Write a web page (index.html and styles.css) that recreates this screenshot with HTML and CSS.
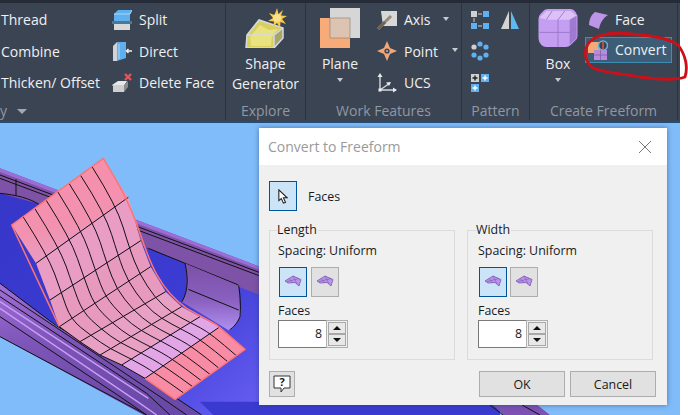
FILE: index.html
```html
<!DOCTYPE html>
<html lang="en">
<head>
<meta charset="utf-8">
<title>Convert to Freeform</title>
<link rel="stylesheet" href="styles.css">
</head>
<body>
<div class="app">
  <div class="ribbon">
    <section class="panel p-modify">
      <div class="panel-body">
        <div class="col col-a">
          <div class="tool">Thread</div>
          <div class="tool">Combine</div>
          <div class="tool">Thicken/ Offset</div>
        </div>
        <div class="col col-b">
          <div class="tool">
            <svg class="ico" viewBox="0 0 20 20"><path d="M2 4 6 0H20L18 4V11H2Z" fill="#5fb0ee"/><path d="M2 4H18L20 0" fill="none" stroke="#a8d8fa"/><path d="M0 11H20V14H0Z" fill="#4a7898"/><path d="M2 14H18V20H2Z" fill="#d8d8d8"/></svg>
            Split
          </div>
          <div class="tool">
            <svg class="ico" viewBox="0 0 20 20"><path d="M1 5 5 1V20H1Z" fill="#d0d4d8"/><path d="M5 1H14V17L5 20Z" fill="#5fb0ee"/><path d="M7 3V18" stroke="#a8d8fa"/><path d="M15 10H20M16.500 8l-2 2 2 2" fill="none" stroke="#f2f2f2" stroke-width="1.500"/></svg>
            Direct
          </div>
          <div class="tool">
            <svg class="ico" viewBox="0 0 20 20"><path d="M0 12 6 8H15L12 13H1Z" fill="#e8e8e8"/><path d="M1 12H12V19H1Z" fill="#cfcfcf"/><path d="M12 12 16 8V14L12 19Z" fill="#8c8c8c"/><path d="M13 1 19 7M19 1 13 7" stroke="#e8525c" stroke-width="2.400"/></svg>
            Delete Face
          </div>
        </div>
      </div>
      <div class="panel-title title-clip">y <span class="caret caret-title"></span></div>
    </section>

    <section class="panel p-explore">
      <div class="panel-body center-col">
        <svg class="ico-large" viewBox="0 0 42 40"><path d="M2 27 14 12 38 20 29 27V40H1Z" fill="#d8cf60"/><path d="M5 29 15 17 24 22 33 21 27 28 26 38H6Z" fill="#e9e27e"/><path d="M29 27 38 20V30L29 40Z" fill="#a8a46a"/><path d="M2 27 14 12 38 20V30L29 40H1ZM2 27H29L38 20M29 27V40" fill="none" stroke="#d3dbe2" stroke-width="1.500"/><path d="M32 0 33.500 6 38 2 36 7.500 42 8 37 11 41 16 35.500 14 35 20 32 15 28 19 29 13.500 23 13 28 10 24 5 29.500 7Z" fill="#f8c850"/><circle cx="32" cy="10" r="4" fill="#fbe08a"/></svg>
        <div class="label label-gen">Shape<br>Generator</div>
      </div>
      <div class="panel-title">Explore</div>
    </section>

    <section class="panel p-work">
      <div class="panel-body">
        <div class="center-col col-plane">
          <svg class="ico-plane" viewBox="0 0 40 40"><rect x="10" y="0" width="30" height="30" fill="#d6d6d6"/><rect x="0" y="10" width="30" height="30" fill="#f6ab78"/><rect x="10" y="10" width="20" height="20" fill="#dcc3b2" stroke="#8d7d70" stroke-width=".6"/></svg>
          <div class="label">Plane</div>
          <span class="caret"></span>
        </div>
        <div class="col col-wf">
          <div class="tool">
            <svg class="ico" viewBox="0 0 20 20"><path d="M4 1H20V16H6Z" fill="#d8d8d8"/><path d="M1 19 14 6" stroke="#9a8878" stroke-width="3"/><path d="M1 19 8 12" stroke="#6e6258" stroke-width="3"/></svg>
            Axis <span class="caret caret-side caret-axis"></span>
          </div>
          <div class="tool">
            <svg class="ico" viewBox="0 0 20 20"><path d="M10 0 13 7 20 10 13 13 10 20 7 13 0 10 7 7Z" fill="#f0a878"/><circle cx="10" cy="10" r="2.600" fill="#3b4453"/><circle cx="10" cy="10" r="1" fill="#f0a878"/></svg>
            Point <span class="caret caret-side caret-point"></span>
          </div>
          <div class="tool">
            <svg class="ico" viewBox="0 0 20 20"><path d="M3 17V2M3 17H19M3 17 13 10" fill="none" stroke="#d4d8dc" stroke-width="1.400"/><path d="M3 0 .5 4H5.500ZM20 17 16 14.500V19.500ZM14 9 9 9.500 12 13Z" fill="#e8ecef"/><rect x="1.500" y="15.500" width="3" height="3" fill="#f0f0f0"/></svg>
            UCS
          </div>
        </div>
      </div>
      <div class="panel-title">Work Features</div>
    </section>

    <section class="panel p-pattern">
      <div class="panel-body pattern-grid">
        <svg class="ico ico-p1" viewBox="0 0 20 20"><rect x="1" y="1" width="6" height="6" fill="#d0d0d0"/><rect x="13" y="1" width="6" height="6" fill="#5fb0ee"/><rect x="1" y="13" width="6" height="6" fill="#5fb0ee"/><rect x="13" y="13" width="6" height="6" fill="#5fb0ee"/><path d="M8 4H12M4 8V12M8 16H12" stroke="#c8d0d8"/></svg>
        <svg class="ico ico-p2" viewBox="0 0 20 20"><path d="M9 1V19H1Z" fill="#d4d4d4"/><path d="M11 1 19 19H11Z" fill="#5fb8ee"/></svg>
        <svg class="ico" viewBox="0 0 20 20"><circle cx="10" cy="3" r="2.600" fill="#5fb0ee"/><circle cx="16" cy="6" r="2.600" fill="#5fb0ee"/><circle cx="16" cy="14" r="2.600" fill="#5fb0ee"/><circle cx="10" cy="17" r="2.600" fill="#5fb0ee"/><circle cx="4" cy="14" r="2.600" fill="#5fb0ee"/><circle cx="4" cy="6" r="2.600" fill="#d0d0d0"/></svg>
        <span></span>
        <svg class="ico" viewBox="0 0 20 20"><rect x="1" y="1" width="8" height="8" fill="#d0d0d0"/><rect x="11" y="1" width="8" height="8" fill="#5fb0ee"/><rect x="1" y="11" width="8" height="8" fill="#5fb0ee"/><path d="M2.500 5H7.500M5 2.500V7.500" stroke="#222" stroke-width="1.400"/><path d="M12.500 5H17.500M15 2.500V7.500M2.500 15H7.500M5 12.500V17.500" stroke="#fff" stroke-width="1.400"/></svg>
      </div>
      <div class="panel-title">Pattern</div>
    </section>

    <section class="panel p-free">
      <div class="panel-body">
        <div class="center-col col-box">
          <svg class="ico-box" viewBox="0 0 40 40"><path d="M10 0H33Q36 0 38 3L40 7V28Q40 31 37 33L33 37Q31 39 28 39H8Q5 39 3 37L1 34Q0 32 0 29V10Q0 7 2 5L6 1Q8 0 10 0Z" fill="#c49ef0"/><path d="M1 9 8 2H33L39 7 32 11H8Z" fill="#dcc0f6"/><path d="M32 11 39 7V30L32 37Z" fill="#a07ad0"/><path d="M20 11V39M1 24H32M32 24 39 19M20 11 27 2M8 11 14 2" stroke="#9a74c8" stroke-width=".9" fill="none"/></svg>
          <div class="label">Box</div>
          <span class="caret"></span>
        </div>
        <div class="col col-ff">
          <div class="tool">
            <svg class="ico ico-face" viewBox="0 0 20 20"><path d="M7 2 20 5C15 8 12 13 11 19L1 15C1 10 3 5 7 2Z" fill="#bd95e8"/></svg>
            Face
          </div>
          <div class="tool tool-active">
            <svg class="ico" viewBox="0 0 20 20"><rect x="0" y="2" width="12" height="11" fill="#f0ab78"/><rect x="6" y="10" width="13" height="10" fill="#b58adf"/><path d="M12.500 10V20M6 15H19" stroke="#85609f" stroke-width=".8"/><circle cx="15" cy="5.500" r="4.500" fill="#3b4453" stroke="#6fb0d8" stroke-width="1.600"/><path d="M15 1V10" stroke="#e2574c" stroke-width="1.400"/></svg>
            Convert
          </div>
        </div>
      </div>
      <div class="panel-title">Create Freeform</div>
    </section>
  </div>

  <div class="viewport">
    <svg class="scene" viewBox="0 9 2040 876" preserveAspectRatio="none">
      <defs>
        <linearGradient id="hull" x1="0" y1="0" x2=".25" y2="1">
          <stop offset="0" stop-color="#a070d8"/>
          <stop offset=".45" stop-color="#7e55b8"/>
          <stop offset="1" stop-color="#6a4aa8"/>
        </linearGradient>
        <linearGradient id="floor" x1="0" y1="0" x2="1" y2="1">
          <stop offset="0" stop-color="#3636c8"/>
          <stop offset=".6" stop-color="#3c3cd4"/>
          <stop offset="1" stop-color="#6a60f4"/>
        </linearGradient>
        <linearGradient id="ledge" x1="0" y1="0" x2="0" y2="1">
          <stop offset="0" stop-color="#7a50a8"/>
          <stop offset=".55" stop-color="#8a60c0"/>
          <stop offset="1" stop-color="#b090f0"/>
        </linearGradient>
        <linearGradient id="topband" x1="0" y1="0" x2=".3" y2="1">
          <stop offset="0" stop-color="#f88ea8"/>
          <stop offset=".7" stop-color="#f292b0"/>
          <stop offset="1" stop-color="#e89cc6"/>
        </linearGradient>
      </defs>
      <!-- interior -->
      <path d="M0 200 780 500V900H580L0 500Z" fill="url(#floor)"/>
      <path d="M600 845H1500V885H640Z" fill="#3a3ad0"/>
      <path d="M1470 845H1600L1650 885H1510Z" fill="#7c52b4"/>
      <path d="M1470 855 1509 885M1566 855 1620 885" stroke="#111" stroke-width="3" fill="none"/>
      <!-- back rim -->
      <path d="M0 145 780 440V525L715 500 555 430 445 385 110 250 0 220Z" fill="#7e52a6"/>
      <path d="M0 145 780 440V450L0 156Z" fill="#9c6cd8"/>
      <path d="M0 165 780 458M0 175 780 468" stroke="#111" stroke-width="3" fill="none"/>
      <path d="M0 220C50 225 90 235 120 255M48 178V228M445 385 715 495" stroke="#111" stroke-width="3" fill="none"/>
      <!-- ledge -->
      <path d="M555 430 715 497 722 585C712 610 700 622 688 632L545 545C565 520 562 470 555 430Z" fill="url(#ledge)"/>
      <path d="M555 430C564 470 566 510 546 545M565 508 716 570M716 497C722 530 722 570 720 590 712 610 700 622 688 630" stroke="#111" stroke-width="3" fill="none"/>
      <!-- front rim -->
      <path d="M0 490 170 620 440 775 610 890H440L0 650Z" fill="url(#hull)"/>
      <path d="M0 565 420 850 470 885M0 545 445 835" stroke="#cc9cf8" stroke-width="4" fill="none"/>
      <path d="M0 490 170 618 440 775 605 885M0 510 480 830 560 885M0 530 440 820 510 885M0 590 360 830 440 885M0 650 440 885" stroke="#111" stroke-width="3" fill="none"/>
      <!-- surface -->
      <path d="M35 315 310 115C355 190 385 235 385 232L108 430Z" fill="url(#topband)"/>
      <path d="M108 430 385 232 422 362 150 540Z" fill="#e99cc4"/>
      <path d="M150 540 422 362 452 440 497 515 240 665 178 620Z" fill="#e79abe"/>
      <path d="M240 665 497 515 545 560 600 590 365 735 300 705Z" fill="#e8a0c4"/>
      <path d="M365 735 600 590 660 620 435 775Z" fill="#e2a6e6"/>
      <path d="M435 775 660 620 735 688 525 838Z" fill="#f88ca4"/>
      <g class="mesh">
        <path d="M69 290Q143 405 164 462Q184 518 198 558Q212 598 242 622Q272 646 302 667Q331 687 363 702Q394 717 429 737Q463 756 551 819"/>
        <path d="M104 265Q177 380 198 438Q218 496 233 536Q247 575 276 602Q304 628 333 649Q361 669 393 684Q424 699 458 718Q491 736 578 800"/>
        <path d="M138 240Q212 356 232 415Q252 473 267 513Q281 552 309 581Q336 609 364 630Q392 651 423 666Q453 681 486 699Q519 717 604 782"/>
        <path d="M173 215Q246 331 266 391Q286 451 301 491Q315 530 342 560Q368 590 395 611Q422 632 453 648Q483 663 515 681Q547 698 630 763"/>
        <path d="M207 190Q281 306 301 368Q320 429 335 468Q349 507 375 539Q400 571 427 593Q453 614 483 630Q512 645 544 662Q576 678 656 744"/>
        <path d="M241 165Q316 281 335 344Q354 406 369 446Q384 485 409 519Q433 553 459 575Q484 596 513 611Q541 626 573 643Q604 659 683 725"/>
        <path d="M276 140Q350 257 369 321Q388 384 403 423Q418 462 442 498Q465 534 490 556Q514 578 543 593Q571 608 602 624Q632 639 709 707"/>
        <path d="M108 430 385 232M150 540 422 362M178 620 452 440M240 665 497 515M300 705 545 560M365 735 600 590M435 775 660 620"/>
      </g>
      <path d="M178 620 35 315 310 115C355 190 385 240 420 340 450 430 480 510 560 565L650 615 735 688 525 838 435 775" fill="none" stroke="#ff7474" stroke-width="4.500" stroke-linejoin="round"/>
      <path d="M178 620 240 665 300 705 365 735 435 775" fill="none" stroke="#111" stroke-width="3"/>
    </svg>
  </div>

  <div class="dialog">
    <header class="dlg-head">
      <span class="dlg-title">Convert to Freeform</span>
      <svg class="dlg-close" viewBox="0 0 14 14"><path d="M1 1 13 13M13 1 1 13" stroke="#777" stroke-width="1"/></svg>
    </header>
    <div class="dlg-body">
      <div class="select-row">
        <button class="icon-btn on select-btn"><svg viewBox="0 0 12 18" class="cursor"><path d="M1 1V14L4 11.500 6.500 17 9 16 6.500 10.500H11Z" fill="#fff" stroke="#222" stroke-width="1.300"/></svg></button>
        <span>Faces</span>
      </div>
      <div class="groups">
        <fieldset class="group">
          <legend>Length</legend>
          <div class="spacing">Spacing: Uniform</div>
          <div class="btn-row">
            <button class="icon-btn on"><svg class="mini" viewBox="0 0 18 12"><path d="M1 6 9 1 17 4.500 15 11 11 7.500 4 8Z" fill="#b994ea" stroke="#7a58b0" stroke-width=".8" stroke-linejoin="round"/><path d="M5 3.500 9 8M9 1 13 9M3 6.500 15 3.500" stroke="#7a58b0" stroke-width=".6" fill="none"/></svg></button>
            <button class="icon-btn off"><svg class="mini" viewBox="0 0 18 12"><path d="M1 6 9 1 17 4.500 15 11 11 7.500 4 8Z" fill="#b994ea" stroke="#7a58b0" stroke-width=".8" stroke-linejoin="round"/><path d="M5 3.500 9 8M9 1 13 9M3 6.500 15 3.500" stroke="#7a58b0" stroke-width=".6" fill="none"/></svg></button>
          </div>
          <div class="faces-label">Faces</div>
          <div class="spin">
            <div class="spin-input">8</div>
            <div class="spin-btns"><button class="spin-btn"><i class="up"></i></button><button class="spin-btn"><i class="down"></i></button></div>
          </div>
        </fieldset>
        <fieldset class="group group-width">
          <legend>Width</legend>
          <div class="spacing">Spacing: Uniform</div>
          <div class="btn-row">
            <button class="icon-btn on"><svg class="mini" viewBox="0 0 18 12"><path d="M1 6 9 1 17 4.500 15 11 11 7.500 4 8Z" fill="#b994ea" stroke="#7a58b0" stroke-width=".8" stroke-linejoin="round"/><path d="M5 3.500 9 8M9 1 13 9M3 6.500 15 3.500" stroke="#7a58b0" stroke-width=".6" fill="none"/></svg></button>
            <button class="icon-btn off"><svg class="mini" viewBox="0 0 18 12"><path d="M1 6 9 1 17 4.500 15 11 11 7.500 4 8Z" fill="#b994ea" stroke="#7a58b0" stroke-width=".8" stroke-linejoin="round"/><path d="M5 3.500 9 8M9 1 13 9M3 6.500 15 3.500" stroke="#7a58b0" stroke-width=".6" fill="none"/></svg></button>
          </div>
          <div class="faces-label">Faces</div>
          <div class="spin">
            <div class="spin-input">8</div>
            <div class="spin-btns"><button class="spin-btn"><i class="up"></i></button><button class="spin-btn"><i class="down"></i></button></div>
          </div>
        </fieldset>
      </div>
      <div class="dlg-foot">
        <button class="help-btn"><svg viewBox="0 0 18 18" class="help-ico"><path d="M1 1H17V13H11L8 17V13H1Z" fill="#fff" stroke="#333"/></svg><span class="help-q">?</span></button>
        <div class="foot-actions">
          <button class="push">OK</button>
          <button class="push">Cancel</button>
        </div>
      </div>
    </div>
  </div>

  <svg class="annot" viewBox="0 0 688 120"><path d="M620 33C605 33 592 37 588 44 583 52 585 62 593 68 605 73 625 74 640 77 655 79 675 81 685 77 688 68 686 55 678 45 668 37 645 35 620 33Z" fill="none" stroke="#cc1018" stroke-width="2.800"/></svg>
</div>
</body>
</html>
```

FILE: styles.css
```css
* { box-sizing: border-box; }
html, body { margin: 0; padding: 0; background: #fff; }
body { width: 688px; height: 415px; overflow: hidden; font-family: "Open Sans", "Noto Sans", sans-serif; }
.app { position: relative; width: 680px; height: 415px; overflow: visible; }

/* Ribbon */
.ribbon { display: flex; height: 123px; background: #3b4453; border-top: 3px solid #252c38; border-bottom: 2px solid #1f4f7a; color: #eef0f2; font-size: 14px; }
.panel { display: flex; flex-direction: column; height: 117px; border-right: 1px solid #2b3340; flex: none; }
.panel-body { flex: 1; display: flex; min-height: 0; padding-top: 1px; }
.panel-title { height: 18px; flex: none; text-align: center; line-height: 18px; color: #8f98a4; white-space: nowrap; }
.p-modify { width: 226px; }
.p-explore { width: 80px; }
.p-work { width: 156px; }
.p-pattern { width: 68px; }
.p-free { width: 148px; }
.title-clip { text-align: left; }
.col { display: grid; grid-auto-rows: 31.5px; align-content: start; }
.col-a { width: 112px; padding-left: 1px; }
.tool { display: flex; align-items: center; gap: 7px; white-space: nowrap; }
.ico { width: 20px; height: 20px; flex: none; }
.center-col { display: flex; flex-direction: column; align-items: center; }
.label { line-height: 20px; text-align: center; }
.ico-large { width: 42px; height: 40px; margin-top: 4px; margin-bottom: 6px; }
.label-gen { white-space: nowrap; }
.col-plane { width: 68px; padding-top: 4px; }
.ico-plane { width: 40px; height: 40px; margin-bottom: 6px; }
.col-wf { margin-left: 3px; }
.pattern-grid { display: grid; grid-template-columns: 20px 20px; grid-auto-rows: 31.5px; column-gap: 10px; padding-left: 8px; align-items: center; }
.col-box { width: 56px; padding-top: 5px; }
.ico-box { width: 40px; height: 39px; margin-bottom: 6px; }
.col-ff { margin-left: -1px; }
.col-ff .tool { padding-left: 3px; }
.col-ff .tool-active { padding-left: 2px; margin-top: 1px; height: 26px; width: 87px; background: #3d5d76; border: 1px solid #3f8fb5; }
.caret { display: block; width: 0; height: 0; border-left: 3.500px solid transparent; border-right: 3.500px solid transparent; border-top: 4px solid #c4cad0; margin-top: 4px; }
.caret-side { margin: 0 0 2px; }
.caret-axis { margin-left: 6px; }
.caret-point { margin-left: 7px; }
.caret-title { display: inline-block; border-left-width: 5px; border-right-width: 5px; border-top: 5px solid #a0a8b2; margin: 0 0 1px 6px; vertical-align: middle; }

/* Viewport */
.viewport { height: 292px; background: #80bcf9; overflow: hidden; }
.scene { display: block; width: 680px; height: 292px; }
.mesh path { fill: none; stroke: #161018; stroke-width: 3; stroke-linejoin: round; }

/* Dialog */
.dialog { position: absolute; left: 259px; top: 128px; width: 408px; height: 277px; background: #f0f0f0; box-shadow: 0 0 5px rgba(30, 60, 110, .55); font-size: 12.4px; color: #1a1a1a; display: flex; flex-direction: column; }
.dlg-head { height: 37px; flex: none; background: #fff; display: flex; align-items: center; justify-content: space-between; padding: 0 15px 0 9px; }
.dlg-title { font-size: 14px; color: #9a9a9a; }
.dlg-close { width: 14px; height: 14px; }
.dlg-body { flex: 1; display: flex; flex-direction: column; padding: 16px 11px 8px 10px; }
.select-row { display: flex; align-items: center; gap: 11px; height: 30px; }
button { font: inherit; color: inherit; padding: 0; margin: 0; }
.icon-btn { width: 28px; height: 30px; display: flex; align-items: center; justify-content: center; border: 1px solid #adadad; background: #e1e1e1; }
.icon-btn.on { background: #cce4f7; border-color: #005499; }
.cursor { width: 10px; height: 15px; }
.mini { width: 18px; height: 12px; margin-top: -2px; }
.groups { display: flex; gap: 12px; margin-top: 12px; }
.group { width: 186px; height: 137px; margin: 0; padding: 6px 0 0 8px; border: 1px solid #dcdcdc; }
.group-width { padding-left: 10px; }
.group-width legend { margin-left: -2px; }
legend { padding: 0 1px 0 0; margin-left: -1px; line-height: 14px; font-size: 12.4px; }
.spacing { line-height: 17px; margin-top: -1px; }
.btn-row { display: flex; gap: 4px; margin: 8px 0 0 1px; }
.group-width .btn-row { gap: 3px; }
.faces-label { line-height: 16px; margin-top: 6px; }
.spin { display: flex; margin-top: 1px; }
.spin-input { width: 48px; height: 28px; background: #fff; border: 1px solid #7a7a7a; border-right: 0; text-align: right; padding-right: 4px; line-height: 26px; }
.spin-btns { width: 22px; height: 28px; padding: 1px; border: 1px solid #b0b0b0; display: flex; flex-direction: column; }
.spin-btn { flex: 1; display: flex; align-items: center; justify-content: center; background: #e8e8e8; border: 1px solid #a8a8a8; }
.spin-btn i { display: block; width: 0; height: 0; border-left: 4px solid transparent; border-right: 4px solid transparent; }
.spin-btn .up { border-bottom: 4px solid #111; }
.spin-btn .down { border-top: 4px solid #111; }
.dlg-foot { display: flex; justify-content: space-between; margin-top: 11px; }
.help-btn { position: relative; width: 26px; height: 26px; background: #e1e1e1; border: 1px solid #adadad; display: flex; align-items: center; justify-content: center; }
.help-ico { width: 18px; height: 18px; }
.help-q { position: absolute; left: 0; right: 0; top: 3px; text-align: center; font-size: 11px; font-weight: 700; line-height: 13px; }
.foot-actions { display: flex; gap: 5px; }
.push { width: 86px; height: 26px; background: #e1e1e1; border: 1px solid #adadad; }

.annot { position: absolute; left: 0; top: 0; width: 688px; height: 120px; pointer-events: none; }
```
